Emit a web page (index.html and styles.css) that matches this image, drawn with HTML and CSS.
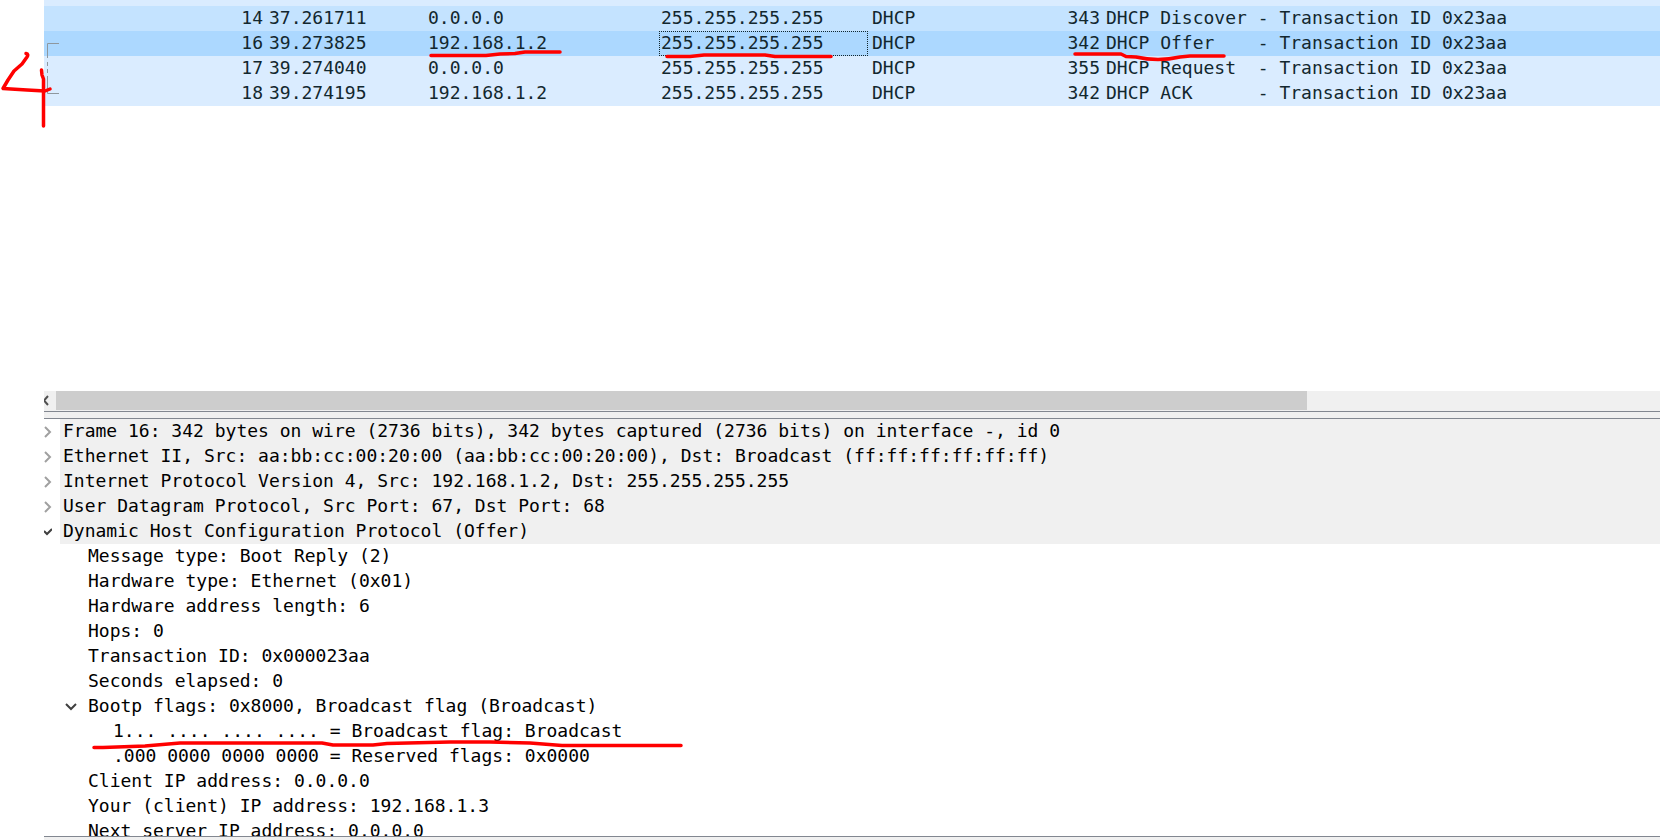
FILE: index.html
```
<!DOCTYPE html>
<html lang="en">
<head>
<meta charset="utf-8">
<title>Packet capture</title>
<link rel="stylesheet" href="styles.css">
</head>
<body>
<main class="app">
  <section class="packets" aria-label="Packet list">
    <div class="row-sliver"></div>
    <table class="packet-table">
      <colgroup>
        <col class="col-no"><col class="col-time"><col class="col-source"><col class="col-dest"><col class="col-proto"><col class="col-length"><col>
      </colgroup>
      <tbody>
        <tr class="discover"><td class="num">14</td><td>37.261711</td><td>0.0.0.0</td><td>255.255.255.255</td><td class="proto">DHCP</td><td class="num">343</td><td>DHCP Discover - Transaction ID 0x23aa</td></tr>
        <tr class="selected"><td class="num">16</td><td>39.273825</td><td>192.168.1.2</td><td class="focused">255.255.255.255</td><td class="proto">DHCP</td><td class="num">342</td><td>DHCP Offer    - Transaction ID 0x23aa</td></tr>
        <tr><td class="num">17</td><td>39.274040</td><td>0.0.0.0</td><td>255.255.255.255</td><td class="proto">DHCP</td><td class="num">355</td><td>DHCP Request  - Transaction ID 0x23aa</td></tr>
        <tr><td class="num">18</td><td>39.274195</td><td>192.168.1.2</td><td>255.255.255.255</td><td class="proto">DHCP</td><td class="num">342</td><td>DHCP ACK      - Transaction ID 0x23aa</td></tr>
      </tbody>
    </table>
  </section>
  <div class="scrollbar">
    <button class="scroll-left" aria-label="Scroll left"><svg width="9" height="19" viewBox="0 0 9 19"><path d="M4 5L0 9.500L4 14" fill="none" stroke="#505050" stroke-width="2"/></svg></button>
    <div class="track"><div class="thumb"></div></div>
  </div>
  <div class="splitter"></div>
  <section class="details" aria-label="Packet details">
    <ul class="tree">
      <li class="layer"><button class="toggle" aria-label="Expand frame"><svg width="8" height="12" viewBox="0 0 8 12"><path d="M1 1L6 6L1 11" class="closed"/></svg></button><span class="label">Frame 16: 342 bytes on wire (2736 bits), 342 bytes captured (2736 bits) on interface -, id 0</span></li>
      <li class="layer"><button class="toggle" aria-label="Expand Ethernet"><svg width="8" height="12" viewBox="0 0 8 12"><path d="M1 1L6 6L1 11" class="closed"/></svg></button><span class="label">Ethernet II, Src: aa:bb:cc:00:20:00 (aa:bb:cc:00:20:00), Dst: Broadcast (ff:ff:ff:ff:ff:ff)</span></li>
      <li class="layer"><button class="toggle" aria-label="Expand IP"><svg width="8" height="12" viewBox="0 0 8 12"><path d="M1 1L6 6L1 11" class="closed"/></svg></button><span class="label">Internet Protocol Version 4, Src: 192.168.1.2, Dst: 255.255.255.255</span></li>
      <li class="layer"><button class="toggle" aria-label="Expand UDP"><svg width="8" height="12" viewBox="0 0 8 12"><path d="M1 1L6 6L1 11" class="closed"/></svg></button><span class="label">User Datagram Protocol, Src Port: 67, Dst Port: 68</span></li>
      <li class="layer"><button class="toggle" aria-label="Collapse DHCP"><svg width="8" height="12" viewBox="0 0 8 12"><path d="M0 5L3 8L8 3" class="open"/></svg></button><span class="label">Dynamic Host Configuration Protocol (Offer)</span></li>
    </ul>
    <ul class="tree fields">
      <li>Message type: Boot Reply (2)</li>
      <li>Hardware type: Ethernet (0x01)</li>
      <li>Hardware address length: 6</li>
      <li>Hops: 0</li>
      <li>Transaction ID: 0x000023aa</li>
      <li>Seconds elapsed: 0</li>
      <li class="group"><button class="toggle" aria-label="Collapse Bootp flags"><svg width="12" height="12" viewBox="0 0 12 12"><path d="M1 3L6 8L11 3" class="open"/></svg></button><span>Bootp flags: 0x8000, Broadcast flag (Broadcast)</span>
        <ul class="tree bits">
          <li>1... .... .... .... = Broadcast flag: Broadcast</li>
          <li>.000 0000 0000 0000 = Reserved flags: 0x0000</li>
        </ul>
      </li>
      <li>Client IP address: 0.0.0.0</li>
      <li>Your (client) IP address: 192.168.1.3</li>
      <li>Next server IP address: 0.0.0.0</li>
    </ul>
  </section>
  <div class="bottom-edge"></div>
</main>
<svg class="marks" width="1660" height="840" viewBox="0 0 1660 840" aria-hidden="true">
  <g fill="none" stroke="#8e979e" stroke-width="1">
    <path d="M59 43.500H47.500V58M47.500 80V93.500H59"/>
    <path d="M47.500 62V80" stroke-dasharray="4 3"/>
  </g>
  <g fill="none" stroke="#ff0000" stroke-width="3.500" stroke-linecap="round" stroke-linejoin="round">
    <path d="M26 53.500Q29 54 27 57L22 64L14 71L8 80L3 88.500L27 90L45 91L50 89"/>
    <path d="M41.500 70L42 75L43.500 79V126"/>
    <path d="M431 55.500H486L500 54L515 53.500L525 52H560"/>
    <path d="M667 56.500L690 56.500L704 55H765L775 56.500H831"/>
    <path d="M1075 54H1121L1126 56.500L1136 57Q1158 62 1180 57L1190 56H1224"/>
    <path d="M94 747.500H103L145 746L180 743H322L333 745H373L387 743.500L450 742L490 742L530 743L562 745.500H681"/>
  </g>
</svg>
</body>
</html>
```
FILE: styles.css
```
* {
  box-sizing: border-box;
}

body {
  margin: 0;
  background: #ffffff;
  color: #000000;
  font: 18px/24px "DejaVu Sans Mono", monospace;
  overflow: hidden;
}

.app {
  display: flex;
  flex-direction: column;
  height: 100vh;
  padding-left: 44px;
}

.packets {
  flex: 391 1 0;
  min-height: 0;
  overflow: hidden;
  color: #12272e;
}

.row-sliver {
  height: 6px;
  background: #daecff;
}

.packet-table {
  width: 100%;
  table-layout: fixed;
  border-collapse: collapse;
}

.packet-table tr {
  background: #daecff;
}

.packet-table .discover {
  background: #c4e3ff;
}

.packet-table .selected {
  background: #acd8ff;
}

.packet-table td {
  height: 25px;
  padding: 0 2px;
  line-height: 23px;
  vertical-align: top;
  white-space: pre;
}

.packet-table .num {
  padding-right: 4px;
  text-align: right;
}

.packet-table .proto {
  padding-left: 4px;
}

.packet-table .focused {
  outline: 1px dotted #12272e;
  outline-offset: -1px;
}

.col-no {
  width: 223px;
}

.col-time {
  width: 159px;
}

.col-source {
  width: 233px;
}

.col-dest {
  width: 209px;
}

.col-proto {
  width: 160px;
}

.col-length {
  width: 76px;
}

button {
  margin: 0;
  padding: 0;
  border: 0;
  background: transparent;
}

.scrollbar {
  display: flex;
  height: 20px;
  background: #f0f0f0;
}

.scroll-left {
  width: 12px;
  height: 19px;
  text-align: left;
}

.scroll-left svg,
.toggle svg {
  display: block;
}

.track {
  flex: 1;
}

.thumb {
  width: 78%;
  height: 19px;
  background: #cdcdcd;
}

.splitter {
  height: 8px;
  border-top: 1px solid #828790;
  border-bottom: 1px solid #828790;
  background: #f0f0f0;
}

.details {
  flex: 417 1 0;
  min-height: 0;
  overflow: hidden;
}

.tree {
  margin: 0;
  padding: 0;
  list-style: none;
  line-height: 23px;
  white-space: nowrap;
}

.tree li {
  padding-bottom: 2px;
}

.tree .layer {
  display: flex;
  align-items: center;
  padding-bottom: 0;
}

.layer .toggle {
  width: 16px;
}

.layer .label {
  flex: 1;
  padding: 0 0 2px 3px;
  background: #f0f0f0;
}

.fields {
  padding-left: 44px;
}

.tree .group {
  position: relative;
  padding-bottom: 0;
}

.group > .toggle {
  position: absolute;
  top: 7px;
  left: -23px;
}

.bits {
  padding: 2px 0 0 25px;
}

.closed,
.open {
  fill: none;
  stroke: #a0a0a0;
  stroke-width: 2;
}

.open {
  stroke: #404040;
}

.bottom-edge {
  height: 4px;
  border-top: 1px solid #828790;
  background: #f0f0f0;
}

.marks {
  position: absolute;
  top: 0;
  left: 0;
  pointer-events: none;
}
```
